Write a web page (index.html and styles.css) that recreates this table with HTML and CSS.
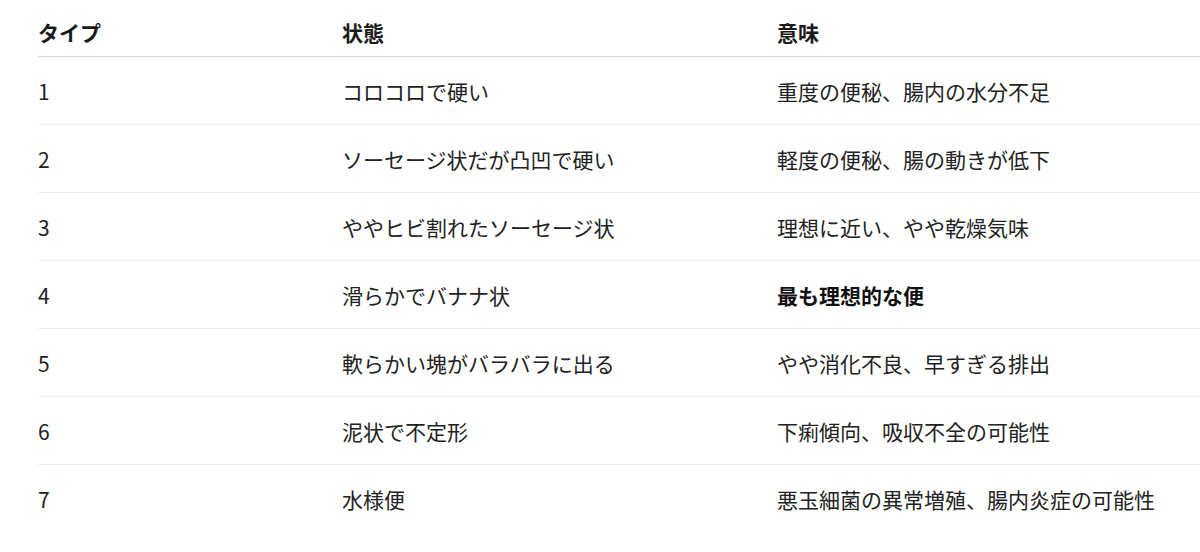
FILE: index.html
```html
<!DOCTYPE html>
<html lang="ja">
<head>
<meta charset="utf-8">
<link rel="stylesheet" href="styles.css">
</head>
<body>
<div class="wrap">
<table class="bristol">
  <colgroup>
    <col class="c1">
    <col class="c2">
    <col class="c3">
  </colgroup>
  <thead>
    <tr><th>タイプ</th><th>状態</th><th>意味</th></tr>
  </thead>
  <tbody>
    <tr><td>1</td><td>コロコロで硬い</td><td>重度の便秘、腸内の水分不足</td></tr>
    <tr><td>2</td><td>ソーセージ状だが凸凹で硬い</td><td>軽度の便秘、腸の動きが低下</td></tr>
    <tr><td>3</td><td>ややヒビ割れたソーセージ状</td><td>理想に近い、やや乾燥気味</td></tr>
    <tr><td>4</td><td>滑らかでバナナ状</td><td><strong>最も理想的な便</strong></td></tr>
    <tr><td>5</td><td>軟らかい塊がバラバラに出る</td><td>やや消化不良、早すぎる排出</td></tr>
    <tr><td>6</td><td>泥状で不定形</td><td>下痢傾向、吸収不全の可能性</td></tr>
    <tr><td>7</td><td>水様便</td><td>悪玉細菌の異常増殖、腸内炎症の可能性</td></tr>
  </tbody>
</table>
</div>
</body>
</html>
```
FILE: styles.css
```css
html, body {
  margin: 0;
  padding: 0;
  background: #ffffff;
}
.wrap {
  padding: 8px 0 0 38px;
}
.bristol {
  width: 1162px;
  border-collapse: collapse;
  table-layout: fixed;
  font-family: "Noto Sans CJK JP", "Noto Sans", sans-serif;
  font-size: 21px;
  line-height: 30px;
  color: #222222;
}
.c1 { width: 304px; }
.c2 { width: 435px; }
.bristol th {
  text-align: left;
  font-weight: 700;
  color: #1a1a1a;
  height: 48px;
  padding: 0;
  vertical-align: middle;
  border-bottom: 1px solid #d8d8d8;
}
.bristol td {
  height: 67px;
  padding: 0;
  vertical-align: middle;
  border-bottom: 1px solid #ececec;
}
.bristol tbody tr:last-child td {
  border-bottom: none;
}
.bristol strong {
  font-weight: 700;
  color: #111111;
}
```
